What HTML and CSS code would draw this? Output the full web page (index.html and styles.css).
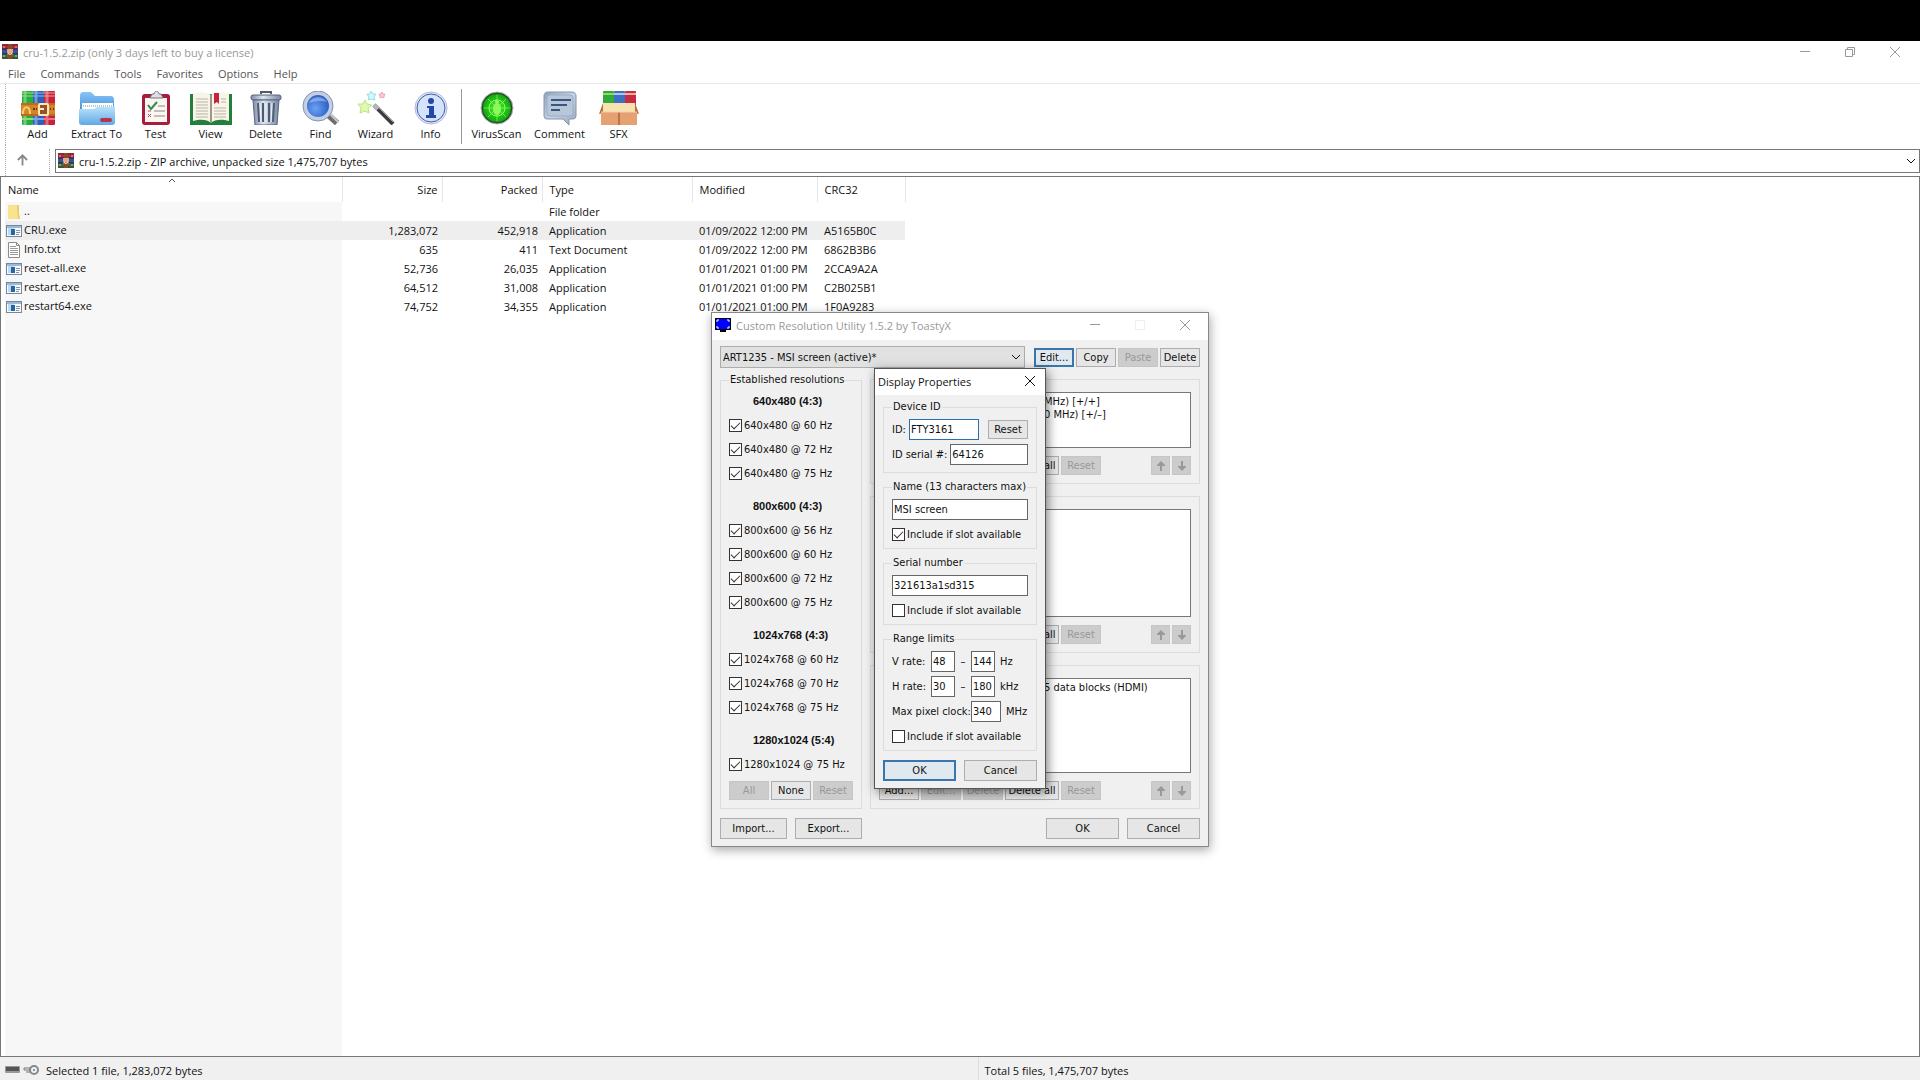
FILE: index.html
```html
<!DOCTYPE html>
<html lang="en">
<head>
  <meta charset="UTF-8" />
  <meta name="viewport" content="width=device-width, initial-scale=1.0" />
  <title>cru-1.5.2.zip</title>
  <link rel="stylesheet" href="styles.css">
</head>
<body>
  <svg class="defs" aria-hidden="true">
    <defs>
      <linearGradient id="gBlue" x1="0" y1="0" x2="0" y2="1">
        <stop offset="0" stop-color="#8cc4f5" /><stop offset="1" stop-color="#2f86d8" />
      </linearGradient>
      <linearGradient id="gFolder" x1="0" y1="0" x2="0" y2="1">
        <stop offset="0" stop-color="#b9e2fb" /><stop offset="1" stop-color="#5fa9e4" />
      </linearGradient>
      <linearGradient id="gMetal" x1="0" y1="0" x2="1" y2="0">
        <stop offset="0" stop-color="#7d8ea8" /><stop offset="0.4" stop-color="#dfe6f0" /><stop offset="1" stop-color="#7587a2" />
      </linearGradient>
      <linearGradient id="gNote" x1="0" y1="0" x2="1" y2="1">
        <stop offset="0" stop-color="#8fa3be" /><stop offset="0.5" stop-color="#c6d2e2" /><stop offset="1" stop-color="#94a6bf" />
      </linearGradient>
      <radialGradient id="gLens" cx="0.4" cy="0.6" r="0.7">
        <stop offset="0" stop-color="#6aa4f5" /><stop offset="1" stop-color="#1b48b8" />
      </radialGradient>
      <radialGradient id="gScan">
        <stop offset="0" stop-color="#49f032" /><stop offset="1" stop-color="#0da30d" />
      </radialGradient>
      <symbol id="books" viewBox="0 0 34 34">
        <rect x="1" y="0" width="11" height="34" rx="1" fill="#27ad3c" />
        <rect x="12" y="0" width="11" height="34" rx="1" fill="#2b60bd" />
        <rect x="23" y="0" width="11" height="34" rx="1" fill="#c9213b" />
        <path d="M4 0v34M15 0v34M26 0v34" stroke="#fff" stroke-opacity=".35" stroke-width="3" />
        <path d="M1 2h11M1 5h11" stroke="#9be07a" /><path d="M12 2h11M12 5h11" stroke="#8fb4ee" /><path d="M23 2h11M23 5h11" stroke="#f0a58c" />
        <path d="M1 28h11" stroke="#8fdd6a" stroke-width="2" /><path d="M12 28h11" stroke="#7aa5ea" stroke-width="2" /><path d="M23 28h11" stroke="#ee7080" stroke-width="2" />
        <rect x="0" y="12" width="34" height="13" fill="#d58427" />
        <path d="M0 13h34M0 24h34" stroke="#9c5616" />
        <path d="M2 23c0-9 7-9 7 0" fill="none" stroke="#f4d073" stroke-width="2" />
        <rect x="18" y="13" width="9" height="11" rx="1" fill="#9a5220" stroke="#fbe5bd" stroke-width="2" />
        <path d="M19 18h4" stroke="#fff1cf" stroke-width="2" /><path d="M12 18h2M15 18h1M29 18h1M32 18h1" stroke="#6b340e" stroke-width="2" />
      </symbol>
      <symbol id="rar" viewBox="0 0 16 16">
        <rect width="16" height="5" fill="#b52a40" /><rect y="5" width="16" height="5" fill="#3c4f9c" /><rect y="10" width="16" height="5" fill="#2c7c3e" />
        <path d="M0 1h16M0 14h16" stroke="#5d2734" /><path d="M0 5h16M0 10h16" stroke="#1d2348" />
        <rect x="6" width="4" height="15" fill="#8b4a27" />
        <path d="M5 5h6v6H5z" fill="#b5683a" /><path d="M6 5v3c0 3 4 3 4 0V5M8 5v4" fill="none" stroke="#fff5dd" />
        <path d="M1 3h2M13 3h2M1 12h2M13 12h2" stroke="#e7c56b" />
      </symbol>
      <symbol id="exe" viewBox="0 0 16 12">
        <rect x=".5" y=".5" width="15" height="11" fill="#f7fbff" stroke="#74879c" />
        <path d="M1 2h14" stroke="#9db9d3" stroke-width="2" />
        <rect x="2" y="3" width="6" height="7" fill="#b9dcf3" /><rect x="5" y="4" width="4" height="6" fill="#28669c" />
        <path d="M10 5.500h4M10 7.500h4M10 9.500h3" stroke="#8a93a0" />
      </symbol>
      <symbol id="txt" viewBox="0 0 12 16">
        <path d="M.5.500h8l3 3v12H.5z" fill="#fff" stroke="#8b8b8b" /><path d="M8.500.500v3h3" fill="none" stroke="#8b8b8b" />
        <path d="M2 4.500h6M2 6.500h8M2 8.500h8M2 10.500h8M2 12.500h8" stroke="#9a9a9a" />
      </symbol>
      <symbol id="dir" viewBox="0 0 14 16">
        <path d="M1 1h11v14H1z" fill="#f9e38f" /><path d="M10 1h2v8l1 6h-2z" fill="#e8cb68" />
      </symbol>
      <symbol id="min" viewBox="0 0 12 12"><path d="M1 5.500h10" stroke="currentColor" /></symbol>
      <symbol id="max" viewBox="0 0 12 12"><path d="M1.500 1.500h9v9h-9z" fill="none" stroke="currentColor" /></symbol>
      <symbol id="restore" viewBox="0 0 12 12"><path d="M1.500 3.500h7v7h-7zM3.500 3.500v-2h7v7h-2" fill="none" stroke="currentColor" /></symbol>
      <symbol id="close" viewBox="0 0 12 12"><path d="M1 1l10 10M11 1L1 11" stroke="currentColor" /></symbol>
      <symbol id="chevron" viewBox="0 0 10 10"><path d="M1 3l4 4 4-4" fill="none" stroke="currentColor" /></symbol>
      <symbol id="up" viewBox="0 0 8 10"><path d="M4 0l4 4v1H5v5H3V5H0V4z" fill="currentColor" /></symbol>
      <symbol id="down" viewBox="0 0 8 10"><path d="M4 10l4-4V5H5V0H3v5H0v1z" fill="currentColor" /></symbol>
    </defs>
  </svg>

  <div class="app">
    <header class="titlebar">
      <svg class="icon16"><use href="#rar" /></svg>
      <h1>cru-1.5.2.zip (only 3 days left to buy a license)</h1>
      <div class="winbtns">
        <button aria-label="Minimize"><svg><use href="#min" /></svg></button>
        <button aria-label="Restore"><svg><use href="#restore" /></svg></button>
        <button aria-label="Close"><svg><use href="#close" /></svg></button>
      </div>
    </header>

    <nav class="menu">
      <button>File</button>
      <button>Commands</button>
      <button>Tools</button>
      <button>Favorites</button>
      <button>Options</button>
      <button>Help</button>
    </nav>

    <div class="toolbar">
      <button class="tool"><svg viewBox="0 0 34 34"><use href="#books" /></svg>Add</button>
      <button class="tool wide">
        <svg class="big" viewBox="0 0 38 34">
          <path d="M2 5c0-3 1-4 3-4h8l4 4h15c3 0 4 1 4 4v15H2z" fill="url(#gBlue)" />
          <path d="M4 12h31v10H4z" fill="#fff" /><path d="M5 15h29" stroke="#b9c6d4" stroke-width="2" stroke-dasharray="1 1" />
          <path d="M1 18h15l3-2h18v15c0 2-1 3-3 3H4c-2 0-3-1-3-3z" fill="url(#gFolder)" />
          <rect x="22" y="27" width="12" height="4" rx="2" fill="#b8354e" />
        </svg>Extract To</button>
      <button class="tool">
        <svg viewBox="0 0 34 34">
          <rect x="3" y="3" width="28" height="31" rx="3" fill="#a81c3c" />
          <rect x="6" y="7" width="22" height="24" fill="#fbf6f2" />
          <path d="M11 7l2-4h2c1-4 4-4 5 0h2l2 4z" fill="#dcdfe4" stroke="#74777d" />
          <path d="M9 14l3 4 6-7" fill="none" stroke="#2d8b45" stroke-width="2" />
          <path d="M19 15h7M15 20h11" stroke="#888" /><path d="M9 23l3 3M12 23l-3 3M9 20h3" stroke="#c2485a" /><path d="M15 25h11" stroke="#888" />
        </svg>Test</button>
      <button class="tool">
        <svg class="book" viewBox="0 0 42 34">
          <path d="M0 3h42v31H0z" fill="#23803c" /><path d="M3 3c7-3 14-2 18 1 4-3 11-4 18-1v27c-7-2-14-2-18 2-4-4-11-4-18-2z" fill="#f8f4e8" />
          <path d="M21 4v28" stroke="#9c9788" stroke-width="2" />
          <path d="M6 8h12M6 11h12M6 14h12M6 17h12M6 20h12M6 23h12M6 26h12M31 8h5M31 11h5M24 17h12M24 20h12M24 23h12M24 26h12" stroke="#b8b4a8" />
          <path d="M24 2h5v11l-2-2-3 2z" fill="#c5243a" />
        </svg>View</button>
      <button class="tool">
        <svg viewBox="0 0 34 34">
          <path d="M12 3V1h10v2" fill="none" stroke="#525b69" stroke-width="2" />
          <rect x="2" y="4" width="30" height="5" rx="2" fill="url(#gMetal)" stroke="#55627a" />
          <path d="M4 9h26l-2 25H6z" fill="url(#gMetal)" stroke="#596780" />
          <path d="M9 12l1 19M14 12v19M20 12v19M25 12l-1 19" stroke="#4e5c75" stroke-width="2" />
          <path d="M11 12l1 19M17 12v19M23 12l-1 19" stroke="#f0f4f9" />
        </svg>Delete</button>
      <button class="tool">
        <svg class="big" viewBox="0 0 38 34">
          <path d="M25 23l10 9" stroke="#6d6d70" stroke-width="6" /><path d="M27 22l9 9" stroke="#c7c7cb" stroke-width="2" />
          <circle cx="16" cy="15" r="13" fill="url(#gLens)" stroke="#c4d0e2" stroke-width="4" />
          <circle cx="16" cy="15" r="15" fill="none" stroke="#7d92b5" />
          <path d="M7 12c3-7 14-8 18-1-6-2-12-1-18 1z" fill="#fff" fill-opacity=".35" />
        </svg>Find</button>
      <button class="tool">
        <svg class="big" viewBox="0 0 38 34">
          <path d="M17 14l19 19" stroke="#3c3c40" stroke-width="4" /><path d="M17 14l4 4" stroke="#b5b5ba" stroke-width="4" /><path d="M22 17l14 14" stroke="#9a9aa0" />
          <path d="M8 9l2 4 5 1-4 3 1 5-4-2-5 2 1-5-3-4 5 0z" fill="#e2f8b0" stroke="#b9e67f" />
          <path d="M14 0l2 3 3 0-2 3 1 3-4-1-3 1 1-3-2-3 3 0z" fill="#d5f7f8" stroke="#94e0e8" />
          <path d="M25 1l1 2 2 0-1 2 0 2-2-1-2 1 0-2-1-2 2 0z" fill="#f9cbd8" stroke="#f0a3ba" />
        </svg>Wizard</button>
      <button class="tool">
        <svg viewBox="0 0 34 34">
          <circle cx="17" cy="17" r="16" fill="#e4ecfb" stroke="#aab9dd" /><circle cx="17" cy="17" r="14" fill="#d4e2fb" stroke="#43599c" stroke-width="1" />
          <circle cx="17" cy="10" r="3" fill="#2448a8" /><path d="M13 15h7v9h2v3H12v-3h3v-7h-2z" fill="#2448a8" />
        </svg>Info</button>
      <span class="sep"></span>
      <button class="tool wide">
        <svg viewBox="0 0 34 34">
          <circle cx="17" cy="17" r="15" fill="url(#gScan)" stroke="#2a4d31" stroke-width="2" /><circle cx="17" cy="17" r="16" fill="none" stroke="#a9b8ab" />
          <path d="M17 4v26M4 17h26M8 8l18 18M26 8L8 26" stroke="#8bff5c" stroke-opacity=".7" />
          <circle cx="17" cy="17" r="8" fill="none" stroke="#93ff66" /><ellipse cx="17" cy="18" rx="4" ry="6" fill="#8cfa59" /><circle cx="17" cy="11" r="2" fill="#8cfa59" />
        </svg>VirusScan</button>
      <button class="tool wide">
        <svg viewBox="0 0 34 34">
          <path d="M5 1h24c3 0 4 2 4 4v19c0 3-1 4-4 4h-3v6l-6-6H5c-3 0-4-1-4-4V5c0-2 1-4 4-4z" fill="url(#gNote)" stroke="#8696ad" />
          <rect x="4" y="4" width="26" height="21" rx="3" fill="#b8c6da" stroke="#9caec6" />
          <path d="M8 9h20M8 14h16M8 19h9" stroke="#3d557c" stroke-width="2" />
        </svg>Comment</button>
      <button class="tool">
        <svg class="book" viewBox="0 0 42 34">
          <rect x="5" y="0" width="11" height="16" rx="1" fill="#33a93c" /><rect x="16" y="0" width="11" height="16" rx="1" fill="#3d6fc2" /><rect x="27" y="0" width="11" height="16" rx="1" fill="#c72c43" />
          <path d="M5 3h11" stroke="#8fdc6a" stroke-width="2" /><path d="M16 3h11" stroke="#a8c8f2" stroke-width="2" /><path d="M27 3h11" stroke="#f2b09c" stroke-width="2" />
          <path d="M5 12h32v9H5z" fill="#f7e3b0" /><path d="M5 12l-4 11 4-1z" fill="#b86b43" /><path d="M37 12l4 11-4-1z" fill="#b86b43" />
          <path d="M3 21h36v13H3z" fill="#e6a173" /><path d="M21 21v13" stroke="#bd7449" stroke-width="2" /><path d="M3 21h36" stroke="#f6cfa5" />
        </svg>SFX</button>
    </div>

    <div class="address">
      <button class="up" aria-label="Up one level"><svg viewBox="0 0 12 12"><path d="M6 12V2M1 6l5-5 5 5" fill="none" stroke="#888" stroke-width="2" /></svg></button>
      <div class="path">
        <svg class="icon16"><use href="#rar" /></svg>
        <select aria-label="Path">
          <option>cru-1.5.2.zip - ZIP archive, unpacked size 1,475,707 bytes</option>
        </select>
        <svg class="arrow"><use href="#chevron" /></svg>
      </div>
    </div>

    <main class="files">
      <svg class="sort" viewBox="0 0 8 5"><path d="M1 4l3-3 3 3" fill="none" stroke="#555" /></svg>
      <table>
        <colgroup>
          <col class="c-name"><col class="c-num"><col class="c-num"><col class="c-type"><col class="c-date"><col class="c-crc">
        </colgroup>
        <thead>
          <tr><th>Name</th><th class="num">Size</th><th class="num">Packed</th><th>Type</th><th>Modified</th><th>CRC32</th></tr>
        </thead>
        <tbody>
          <tr><td><svg><use href="#dir" /></svg>..</td><td class="num"></td><td class="num"></td><td>File folder</td><td></td><td></td></tr>
          <tr class="selected"><td><svg><use href="#exe" /></svg>CRU.exe</td><td class="num">1,283,072</td><td class="num">452,918</td><td>Application</td><td>01/09/2022 12:00 PM</td><td>A5165B0C</td></tr>
          <tr><td><svg><use href="#txt" /></svg>Info.txt</td><td class="num">635</td><td class="num">411</td><td>Text Document</td><td>01/09/2022 12:00 PM</td><td>6862B3B6</td></tr>
          <tr><td><svg><use href="#exe" /></svg>reset-all.exe</td><td class="num">52,736</td><td class="num">26,035</td><td>Application</td><td>01/01/2021 01:00 PM</td><td>2CCA9A2A</td></tr>
          <tr><td><svg><use href="#exe" /></svg>restart.exe</td><td class="num">64,512</td><td class="num">31,008</td><td>Application</td><td>01/01/2021 01:00 PM</td><td>C2B025B1</td></tr>
          <tr><td><svg><use href="#exe" /></svg>restart64.exe</td><td class="num">74,752</td><td class="num">34,355</td><td>Application</td><td>01/01/2021 01:00 PM</td><td>1F0A9283</td></tr>
        </tbody>
      </table>
    </main>

    <footer class="status">
      <div class="cell">
        <svg class="drive" viewBox="0 0 36 12">
          <rect x="0" y="1" width="15" height="7" rx="1" fill="#999" /><rect x="1" y="2" width="13" height="4" fill="#555" />
          <circle cx="29" cy="5" r="4" fill="none" stroke="#888" stroke-width="2" /><circle cx="29" cy="5" r="1" fill="#777" /><path d="M26 3h-7v2h6M25 7h-4" fill="none" stroke="#777" />
        </svg>
        Selected 1 file, 1,283,072 bytes
      </div>
      <div class="cell">Total 5 files, 1,475,707 bytes</div>
    </footer>
  </div>

  <section class="window cru">
    <header class="titlebar">
      <svg class="icon16" viewBox="0 0 16 14">
        <rect x="0" y="0" width="16" height="12" fill="#000" /><rect x="1" y="1" width="14" height="10" fill="#00f" />
        <path d="M2 4V2h2M12 2h2v2M2 8v2h2M12 10h2V8" fill="none" stroke="#fff" /><path d="M5 13h6M8 11v2" stroke="#000" stroke-width="2" />
      </svg>
      <h2>Custom Resolution Utility 1.5.2 by ToastyX</h2>
      <div class="winbtns">
        <button aria-label="Minimize"><svg><use href="#min" /></svg></button>
        <button aria-label="Maximize" disabled><svg><use href="#max" /></svg></button>
        <button aria-label="Close"><svg><use href="#close" /></svg></button>
      </div>
    </header>
    <div class="cru-body">
      <div class="row top">
        <div class="combo">
          <select aria-label="Display"><option>ART1235 - MSI screen (active)*</option></select>
          <svg class="arrow"><use href="#chevron" /></svg>
        </div>
        <button class="btn default">Edit...</button>
        <button class="btn">Copy</button>
        <button class="btn" disabled>Paste</button>
        <button class="btn">Delete</button>
      </div>

      <div class="columns">
        <fieldset class="established">
          <legend>Established resolutions</legend>
          <h3>640x480 (4:3)</h3>
          <label class="check"><input type="checkbox" checked>640x480 @ 60 Hz</label>
          <label class="check"><input type="checkbox" checked>640x480 @ 72 Hz</label>
          <label class="check"><input type="checkbox" checked>640x480 @ 75 Hz</label>
          <h3>800x600 (4:3)</h3>
          <label class="check"><input type="checkbox" checked>800x600 @ 56 Hz</label>
          <label class="check"><input type="checkbox" checked>800x600 @ 60 Hz</label>
          <label class="check"><input type="checkbox" checked>800x600 @ 72 Hz</label>
          <label class="check"><input type="checkbox" checked>800x600 @ 75 Hz</label>
          <h3>1024x768 (4:3)</h3>
          <label class="check"><input type="checkbox" checked>1024x768 @ 60 Hz</label>
          <label class="check"><input type="checkbox" checked>1024x768 @ 70 Hz</label>
          <label class="check"><input type="checkbox" checked>1024x768 @ 75 Hz</label>
          <h3>1280x1024 (5:4)</h3>
          <label class="check"><input type="checkbox" checked>1280x1024 @ 75 Hz</label>
          <div class="row">
            <button class="btn" disabled>All</button>
            <button class="btn">None</button>
            <button class="btn" disabled>Reset</button>
          </div>
        </fieldset>

        <div class="lists">
          <div class="group">
            <ul class="listbox short"><li>MHz) [+/+]</li><li>0 MHz) [+/–]</li></ul>
            <div class="row">
              <button class="btn">Add...</button><button class="btn" disabled>Edit...</button><button class="btn" disabled>Delete</button><button class="btn long">Delete all</button><button class="btn" disabled>Reset</button>
              <button class="btn move first" disabled aria-label="Move up"><svg><use href="#up" /></svg></button>
              <button class="btn move" disabled aria-label="Move down"><svg><use href="#down" /></svg></button>
            </div>
          </div>
          <div class="group">
            <ul class="listbox tall"></ul>
            <div class="row">
              <button class="btn">Add...</button><button class="btn" disabled>Edit...</button><button class="btn" disabled>Delete</button><button class="btn long">Delete all</button><button class="btn" disabled>Reset</button>
              <button class="btn move first" disabled aria-label="Move up"><svg><use href="#up" /></svg></button>
              <button class="btn move" disabled aria-label="Move down"><svg><use href="#down" /></svg></button>
            </div>
          </div>
          <div class="group">
            <ul class="listbox"><li>5 data blocks (HDMI)</li></ul>
            <div class="row">
              <button class="btn">Add...</button><button class="btn" disabled>Edit...</button><button class="btn" disabled>Delete</button><button class="btn long">Delete all</button><button class="btn" disabled>Reset</button>
              <button class="btn move first" disabled aria-label="Move up"><svg><use href="#up" /></svg></button>
              <button class="btn move" disabled aria-label="Move down"><svg><use href="#down" /></svg></button>
            </div>
          </div>
        </div>
      </div>

      <div class="actions">
        <button class="btn file">Import...</button>
        <button class="btn file">Export...</button>
        <button class="btn ok first">OK</button>
        <button class="btn ok">Cancel</button>
      </div>
    </div>
  </section>

  <section class="window props">
    <header class="titlebar">
      <h2>Display Properties</h2>
      <div class="winbtns"><button aria-label="Close"><svg><use href="#close" /></svg></button></div>
    </header>
    <form class="props-body">
      <fieldset>
        <legend>Device ID</legend>
        <div class="field">
          <label for="devId">ID:</label>
          <input class="text id focus" id="devId" value="FTY3161">
          <button type="button" class="btn end">Reset</button>
        </div>
        <div class="field">
          <label for="idSerial">ID serial #:</label>
          <input class="text serial end" id="idSerial" value="64126">
        </div>
      </fieldset>
      <fieldset>
        <legend><label for="name">Name (13 characters max)</label></legend>
        <input class="text full" id="name" value="MSI screen">
        <label class="check"><input type="checkbox" checked>Include if slot available</label>
      </fieldset>
      <fieldset>
        <legend><label for="serial">Serial number</label></legend>
        <input class="text full" id="serial" value="321613a1sd315">
        <label class="check"><input type="checkbox">Include if slot available</label>
      </fieldset>
      <fieldset>
        <legend>Range limits</legend>
        <div class="field range">
          <label for="vMin">V rate:</label>
          <input class="text" id="vMin" value="48"><span>–</span><input class="text" aria-label="V rate max" value="144"><span class="unit">Hz</span>
        </div>
        <div class="field range">
          <label for="hMin">H rate:</label>
          <input class="text" id="hMin" value="30"><span>–</span><input class="text" aria-label="H rate max" value="180"><span class="unit">kHz</span>
        </div>
        <div class="field clock">
          <label for="clock">Max pixel clock:</label>
          <input class="text full" id="clock" value="340"><span class="unit">MHz</span>
        </div>
        <label class="check"><input type="checkbox">Include if slot available</label>
      </fieldset>
      <div class="actions">
        <button type="button" class="btn ok default">OK</button>
        <button type="button" class="btn ok">Cancel</button>
      </div>
    </form>
  </section>
</body>
</html>
```

FILE: styles.css
```css
* {
  box-sizing: border-box;
}

body {
  margin: 0;
  color: #111;
  font-family: 'Open Sans', 'Noto Sans', sans-serif;
  font-size: 11px;
}

button, input, select {
  font: inherit;
  color: inherit;
}

button {
  border: none;
  background: none;
  padding: 0;
}

h1, h2, h3, ul {
  margin: 0;
  padding: 0;
  font-size: inherit;
  font-weight: normal;
}

.defs {
  position: absolute;
  width: 0;
  height: 0;
}

.app {
  display: flex;
  flex-direction: column;
  min-height: 100vh;
  border-top: 41px solid #000;
  background: #fff;
}

.icon16 {
  width: 16px;
  height: 16px;
}

/* title bars */
.titlebar {
  display: flex;
  align-items: center;
  height: 23px;
  padding: 0 3px 1px 2px;
  background: #fff;
  color: #999;
}

.titlebar h1, .titlebar h2 {
  padding-left: 5px;
}

.winbtns {
  display: flex;
  margin-left: auto;
}

.winbtns button {
  display: flex;
  align-items: center;
  justify-content: center;
  width: 45px;
  height: 20px;
}

.winbtns svg {
  width: 12px;
  height: 12px;
}

.winbtns button:disabled {
  color: #eee;
}

/* archive window */
.menu {
  display: flex;
  gap: 15px;
  height: 20px;
  padding: 0 8px;
  border-bottom: 1px solid #e8e8e8;
  color: #555;
}

.toolbar {
  display: flex;
  height: 61px;
  margin-left: 5px;
  padding: 5px 0 1px 4px;
  border-left: 1px dotted #aaa;
}

.tool {
  display: flex;
  flex-direction: column;
  align-items: center;
  gap: 1px;
  width: 55px;
  line-height: 16px;
  padding-top: 2px;
}

.tool.wide {
  width: 63px;
}

.tool svg {
  width: 34px;
  height: 34px;
}

.tool svg.big {
  width: 38px;
}

.tool svg.book {
  width: 42px;
}

.sep {
  width: 1px;
  margin: 0 3px;
  background: #999;
}

.address {
  display: flex;
  height: 31px;
  margin-left: 5px;
  padding-top: 4px;
  border-left: 1px dotted #aaa;
}

.up {
  width: 44px;
  height: 24px;
  margin-right: 5px;
  padding-right: 11px;
  border-right: 1px dotted #aaa;
}

.up svg {
  width: 11px;
  height: 12px;
}

.path {
  display: flex;
  flex: 1;
  align-items: center;
  height: 24px;
  padding: 0 3px 0 2px;
  border: 1px solid #777;
}

.path select, .combo select {
  flex: 1;
  appearance: none;
  border: none;
  background: none;
  padding: 0 5px;
}

.arrow {
  width: 10px;
  height: 10px;
  pointer-events: none;
}

.files {
  position: relative;
  flex: 1;
  padding-left: 4px;
  border: 1px solid #777;
  background: linear-gradient(#f7f7f7, #f7f7f7) 4px 25px / 337px 100% no-repeat;
}

.sort {
  position: absolute;
  left: 167px;
  top: 1px;
  width: 8px;
  height: 5px;
}

.files table {
  width: 900px;
  table-layout: fixed;
  border-collapse: collapse;
}

.c-name { width: 337px; }
.c-num { width: 100px; }
.c-type { width: 150px; }
.c-date { width: 125px; }
.c-crc { width: 88px; }

.files th {
  height: 25px;
  padding: 0 4px 0 7px;
  border-right: 1px solid #e5e5e5;
  font-weight: normal;
  text-align: left;
}

.files th:first-child {
  padding-left: 3px;
}

.files td {
  height: 19px;
  padding: 0 4px 0 7px;
  white-space: nowrap;
}

.files td:first-child {
  padding-left: 1px;
}

.files .num {
  text-align: right;
}

.files td svg {
  width: 16px;
  height: 16px;
  margin-right: 2px;
  vertical-align: middle;
}

.selected {
  background: #eee;
}

.status {
  display: flex;
  height: 23px;
  background: #f0f0f0;
}

.status .cell {
  display: flex;
  flex: 51;
  align-items: center;
  padding: 4px 5px 0;
}

.status .cell + .cell {
  flex: 49;
  border-left: 1px solid #ddd;
}

.drive {
  width: 36px;
  height: 12px;
  margin-right: 5px;
}

/* dialogs */
.window {
  position: absolute;
  background: #f0f0f0;
  border: 1px solid #888;
  font-family: 'DejaVu Sans Condensed', 'DejaVu Sans', sans-serif;
  font-size: 11px;
  white-space: nowrap;
}

.window .titlebar {
  height: 27px;
  padding: 0 1px 3px 3px;
  font-family: 'Open Sans', 'Noto Sans', sans-serif;
}

.cru {
  left: 711px;
  top: 312px;
  width: 498px;
  box-shadow: 1px 3px 10px rgba(0, 0, 0, 0.35);
}

.cru-body {
  padding: 6px 8px 7px;
}

.row {
  display: flex;
  gap: 2px;
}

.top {
  align-items: center;
}

.combo {
  display: flex;
  flex: 1;
  align-items: center;
  height: 22px;
  margin-right: 7px;
  padding-right: 3px;
  border: 1px solid #adadad;
  background: #e1e1e1;
}

.combo select {
  padding: 0 2px;
}

.btn {
  width: 40px;
  height: 19px;
  border: 1px solid #adadad;
  background: #e6e6e6;
  text-align: center;
}

.btn:disabled {
  border-color: #c6c6c6;
  background: #ccc;
  color: #999;
}

.btn.default {
  border: 2px solid #3a76ae;
  background: #e1e9f0;
}

.btn.long { width: 54px; }
.btn.move { width: 19px; }
.btn.file { width: 67px; height: 21px; }
.btn.ok { width: 73px; height: 21px; }

.btn.move svg {
  width: 8px;
  height: 10px;
  vertical-align: middle;
}

.first, .end {
  margin-left: auto;
}

.columns {
  display: flex;
  gap: 8px;
  margin-top: 5px;
}

fieldset {
  margin: 0;
  min-width: 0;
  padding: 5px 8px 7px;
  border: 1px solid #dcdcdc;
}

legend {
  padding: 0 1px;
  line-height: 14px;
}

.established {
  width: 142px;
  padding-top: 2px;
}

.established h3 {
  margin-top: 9px;
  padding-left: 24px;
  font: bold 11px/24px 'Liberation Sans', Arial, sans-serif;
}

.established legend + h3 {
  margin-top: 0;
}

.check {
  display: flex;
  align-items: center;
  gap: 2px;
}

.established .check {
  height: 24px;
}

.established .row {
  margin-top: 5px;
}

.check input {
  appearance: none;
  display: flex;
  justify-content: center;
  width: 13px;
  height: 13px;
  margin: 0;
  border: 1px solid #333;
  background: #fff;
}

.check input:checked::before {
  content: '';
  width: 8px;
  height: 4px;
  margin-top: 2px;
  border: solid #333;
  border-width: 0 0 1px 1px;
  transform: rotate(-45deg);
}

.lists {
  display: flex;
  flex: 1;
  flex-direction: column;
  gap: 12px;
  margin-top: 6px;
}

.group {
  padding: 12px 8px 8px;
  border: 1px solid #dcdcdc;
}

.listbox {
  height: 95px;
  margin-bottom: 8px;
  padding: 2px 0 0 164px;
  border: 1px solid #777;
  background: #fff;
  line-height: 13px;
  list-style: none;
}

.listbox.short { height: 56px; }
.listbox.tall { height: 108px; }

.actions {
  display: flex;
  gap: 8px;
  margin-top: 9px;
}

.props {
  left: 874px;
  top: 368px;
  width: 172px;
  border-color: #555;
  box-shadow: 2px 3px 10px rgba(0, 0, 0, 0.5);
}

.props .titlebar {
  height: 26px;
  padding: 0 0 2px;
  color: #111;
}

.props h2 {
  padding-left: 3px;
}

.props .winbtns button {
  width: 30px;
}

.props-body {
  padding: 5px 8px 7px;
}

.props fieldset + fieldset {
  margin-top: 7px;
}

.field {
  display: flex;
  align-items: center;
  gap: 3px;
}

.field + .field {
  margin-top: 4px;
}

.text {
  flex-shrink: 0;
  width: 24px;
  height: 21px;
  padding: 0 1px;
  border: 1px solid #666;
  border-radius: 0;
  background: #fff;
}

.text.focus { border-color: #2a6fb0; }
.text.id { width: 70px; }
.text.serial { width: 78px; }
.text.full { width: 100%; }

.range {
  display: grid;
  grid-template-columns: 39px 24px 16px 24px 1fr;
  gap: 0;
}

.range span {
  text-align: center;
}

.clock {
  display: grid;
  grid-template-columns: 79px 30px 1fr;
  gap: 0;
}

.field .unit {
  padding-left: 5px;
  text-align: left;
}

.props .check {
  margin: 8px 0 0;
}
```
